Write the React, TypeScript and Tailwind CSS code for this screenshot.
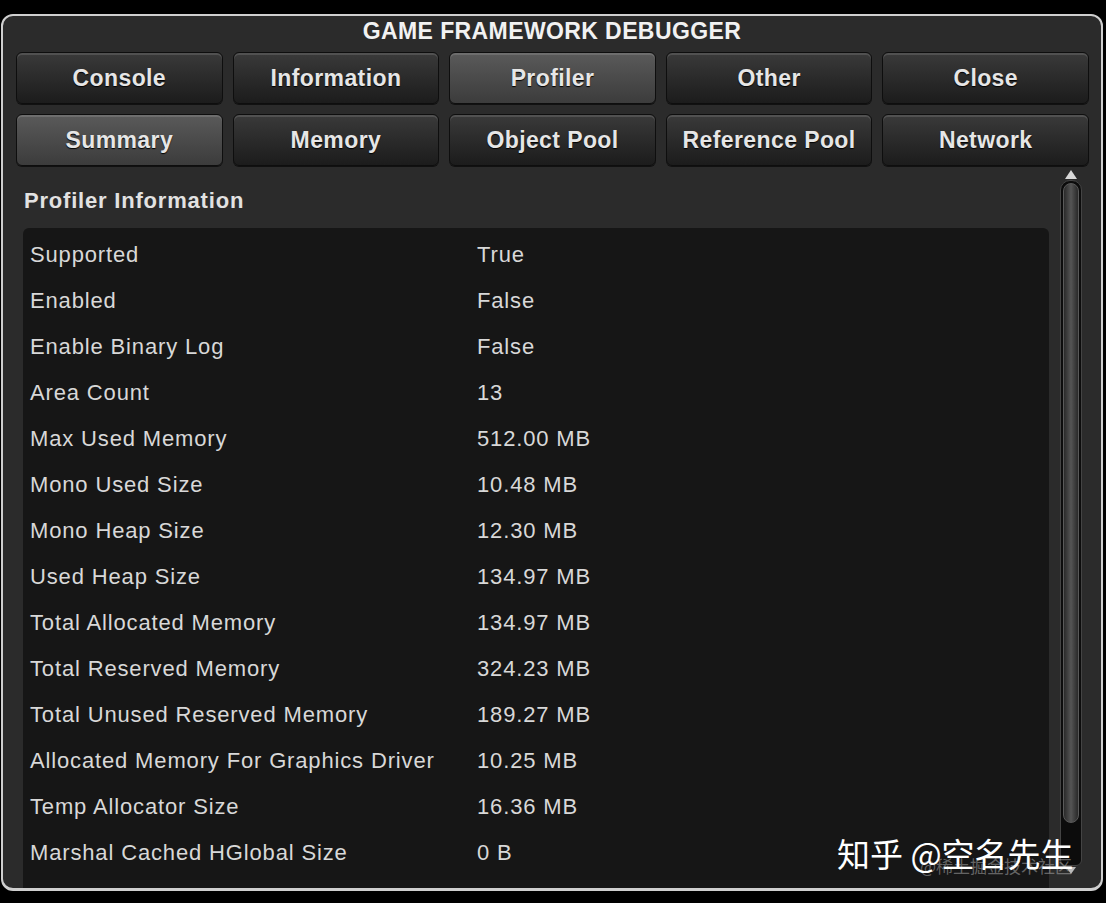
import React from "react";

const topTabs = ["Console", "Information", "Profiler", "Other", "Close"];
const subTabs = ["Summary", "Memory", "Object Pool", "Reference Pool", "Network"];

const rows: [string, string][] = [
  ["Supported", "True"],
  ["Enabled", "False"],
  ["Enable Binary Log", "False"],
  ["Area Count", "13"],
  ["Max Used Memory", "512.00 MB"],
  ["Mono Used Size", "10.48 MB"],
  ["Mono Heap Size", "12.30 MB"],
  ["Used Heap Size", "134.97 MB"],
  ["Total Allocated Memory", "134.97 MB"],
  ["Total Reserved Memory", "324.23 MB"],
  ["Total Unused Reserved Memory", "189.27 MB"],
  ["Allocated Memory For Graphics Driver", "10.25 MB"],
  ["Temp Allocator Size", "16.36 MB"],
  ["Marshal Cached HGlobal Size", "0 B"],
];

function TabButton({ label, active }: { label: string; active?: boolean }) {
  return (
    <div
      className={
        "h-[52px] flex items-center justify-center rounded-[6px] border border-[#0e0e0e] text-[23px] tracking-[0.4px] font-bold text-[#e6e6e6] shadow-[inset_0_2px_0_rgba(255,255,255,0.12),0_1px_0_rgba(0,0,0,0.6)] [text-shadow:0_1px_1px_#000] " +
        (active
          ? "bg-gradient-to-b from-[#5a5a5a] to-[#3c3c3c]"
          : "bg-gradient-to-b from-[#3a3a3a] to-[#1c1c1c]")
      }
    >
      {label}
    </div>
  );
}

export default function App() {
  return (
    <div
      className="w-[1106px] h-[903px] bg-black pt-[14px] pl-[1px] pr-[3px] pb-[12px] relative overflow-hidden"
      style={{ fontFamily: '"Liberation Sans", Arial, sans-serif' }}
    >
      <div className="h-full rounded-[12px] border-2 border-[#cfcfcf] border-b-[3px] bg-[#2b2b2b] flex flex-col overflow-hidden">
        {/* title */}
        <div className="h-[36px] text-center text-[23px] tracking-[0.4px] leading-[30px] font-bold text-[#f2f2f2]">
          GAME FRAMEWORK DEBUGGER
        </div>

        {/* tabs */}
        <div className="grid grid-cols-5 gap-x-[10px] gap-y-[10px] pl-[13px] pr-[12px]">
          {topTabs.map((t) => (
            <TabButton key={t} label={t} active={t === "Profiler"} />
          ))}
          {subTabs.map((t) => (
            <TabButton key={t} label={t} active={t === "Summary"} />
          ))}
        </div>

        {/* body */}
        <div className="flex flex-1 min-h-0 pl-[20px] pr-[18px]">
          <div className="flex-1 flex flex-col min-w-0">
            <div className="h-[62px] pt-[22px] pl-[1px] text-[22px] tracking-[0.8px] leading-[26px] font-bold text-[#e2e2e2]">
              Profiler Information
            </div>
            <div className="flex-1 rounded-tl-[6px] rounded-tr-[6px] bg-[#161616] pt-[3px] pl-[7px] overflow-hidden">
              {rows.map(([k, v]) => (
                <div
                  key={k}
                  className="h-[46px] flex items-center text-[22px] tracking-[0.85px] text-[#d8d8d8]"
                >
                  <div className="w-[447px] shrink-0">{k}</div>
                  <div>{v}</div>
                </div>
              ))}
            </div>
          </div>

          {/* scrollbar */}
          <div className="w-[24px] ml-[10px] pt-[4px] pb-[14px] flex flex-col items-center">
            <div className="w-0 h-0 border-l-[6px] border-r-[6px] border-b-[9px] border-l-transparent border-r-transparent border-b-[#d8d8d8]" />
            <div className="flex-1 w-[22px] mt-[1px] rounded-t-[10px] rounded-b-[6px] bg-[#0c0c0c] border border-[#444] p-[2px] flex flex-col">
              <div className="h-[640px] rounded-[8px] bg-gradient-to-r from-[#2a2a2a] via-[#555] to-[#2a2a2a] border border-[#5a5a5a]" />
            </div>
            <div className="w-0 h-0 mt-[1px] border-l-[5px] border-r-[5px] border-t-[7px] border-l-transparent border-r-transparent border-t-[#bbb]" />
          </div>
        </div>
      </div>

      {/* watermark overlay */}
      <div
        className="absolute left-[920px] top-[857px] text-[17px] leading-[18px] text-[rgba(200,200,200,0.45)]"
        style={{ fontFamily: '"Noto Sans CJK SC", sans-serif' }}
      >
        @稀土掘金技术社区
      </div>
      <div
        className="absolute left-[837px] top-[833px] text-[33px] leading-[40px] text-white"
        style={{ fontFamily: '"Noto Sans CJK SC", sans-serif' }}
      >
        知乎 @空名先生
      </div>
    </div>
  );
}
